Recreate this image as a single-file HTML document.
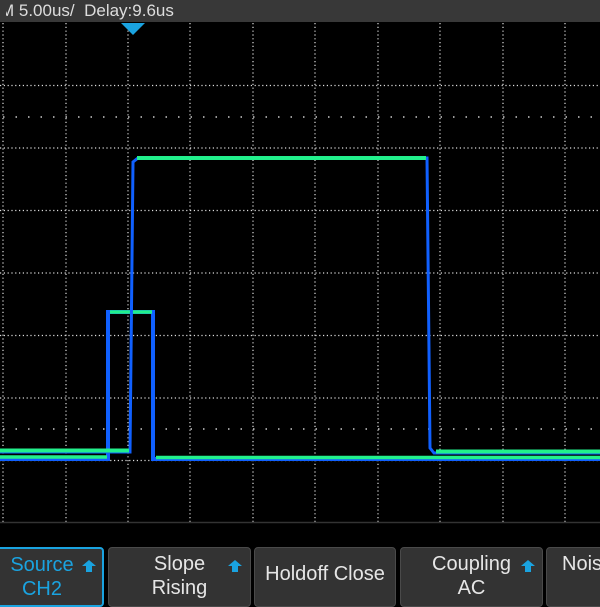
<!DOCTYPE html>
<html><head><style>
body{margin:0;width:600px;height:600px;background:#000;overflow:hidden;position:relative;font-family:"Liberation Sans",sans-serif}
.top{position:absolute;left:0;top:0;width:600px;height:22px;background:#383838;color:#ddd;font-size:17px;line-height:22px;white-space:pre}
.btn{position:absolute;top:547px;height:60px;background:#333;border:1px solid #4a4a4a;border-radius:4px;box-sizing:border-box;color:#e6e6e6;font-size:20px;text-align:center;line-height:24px}
</style></head><body>
<div class="top">M 5.00us/  Delay:9.6us</div>
<div style="position:absolute;left:-8px;top:0;width:14px;height:22px;background:#383838"></div>
<svg style="position:absolute;left:0;top:0" width="600" height="600">
<g stroke="#ddd" stroke-width="1.2" stroke-dasharray="1.2 2.6" fill="none">
<line x1="3" y1="23" x2="3" y2="522"/><line x1="66" y1="23" x2="66" y2="522"/><line x1="128" y1="23" x2="128" y2="522"/><line x1="190" y1="23" x2="190" y2="522"/><line x1="253" y1="23" x2="253" y2="522"/><line x1="315" y1="23" x2="315" y2="522"/><line x1="378" y1="23" x2="378" y2="522"/><line x1="440" y1="23" x2="440" y2="522"/><line x1="503" y1="23" x2="503" y2="522"/><line x1="565" y1="23" x2="565" y2="522"/>
<line x1="0" y1="85.5" x2="600" y2="85.5"/><line x1="0" y1="148" x2="600" y2="148"/><line x1="0" y1="210.5" x2="600" y2="210.5"/><line x1="0" y1="273" x2="600" y2="273"/><line x1="0" y1="335.5" x2="600" y2="335.5"/><line x1="0" y1="398" x2="600" y2="398"/><line x1="0" y1="460.5" x2="600" y2="460.5"/>
</g>
<g stroke="#ccc" stroke-width="1.5" stroke-dasharray="1.5 11" fill="none">
<line x1="3" y1="117" x2="600" y2="117"/><line x1="3" y1="429" x2="600" y2="429"/>
</g>
<line x1="0" y1="522.5" x2="600" y2="522.5" stroke="#333" stroke-width="1.5"/>
<polygon points="121,23 145,23 133,35" fill="#1aa3e0"/>
<!-- trace A -->
<path d="M0 459 H108 V312 H153 V459 H600" fill="none" stroke="#1060ff" stroke-width="4"/>
<path d="M0 457 H107 M110 312 H152 M156 457.5 H600" fill="none" stroke="#22f08c" stroke-width="3.5"/>
<!-- trace B -->
<path d="M0 452 H130 L133 162 L138 158 H427 L430 448 L434 453 H600" fill="none" stroke="#1060ff" stroke-width="3"/>
<path d="M0 450.5 H129 M137 158 H426 M436 451.5 H600" fill="none" stroke="#22f08c" stroke-width="4"/>
</svg>
<div class="btn" style="left:-6px;width:110px;border:2px solid #1aa3e0;color:#1aa3e0;padding-top:4px;padding-right:14px">Source<br>CH2</div>
<div class="btn" style="left:108px;width:143px;padding-top:4px">Slope<br>Rising</div>
<div class="btn" style="left:254px;width:142px;line-height:52px">Holdoff Close</div>
<div class="btn" style="left:400px;width:143px;padding-top:4px">Coupling<br>AC</div>
<div class="btn" style="left:546px;width:80px;padding-top:4px;text-align:left;padding-left:15px">Noise</div>
<svg style="position:absolute;left:0;top:0" width="600" height="600">
<g fill="#1aa3e0">
<path d="M82 566 L89 560 L96 566 H92 V572 H86 V566 Z"/>
<path d="M228 566 L235 560 L242 566 H238 V572 H232 V566 Z"/>
<path d="M521 566 L528 560 L535 566 H531 V572 H525 V566 Z"/>
</g>
</svg>
</body></html>
